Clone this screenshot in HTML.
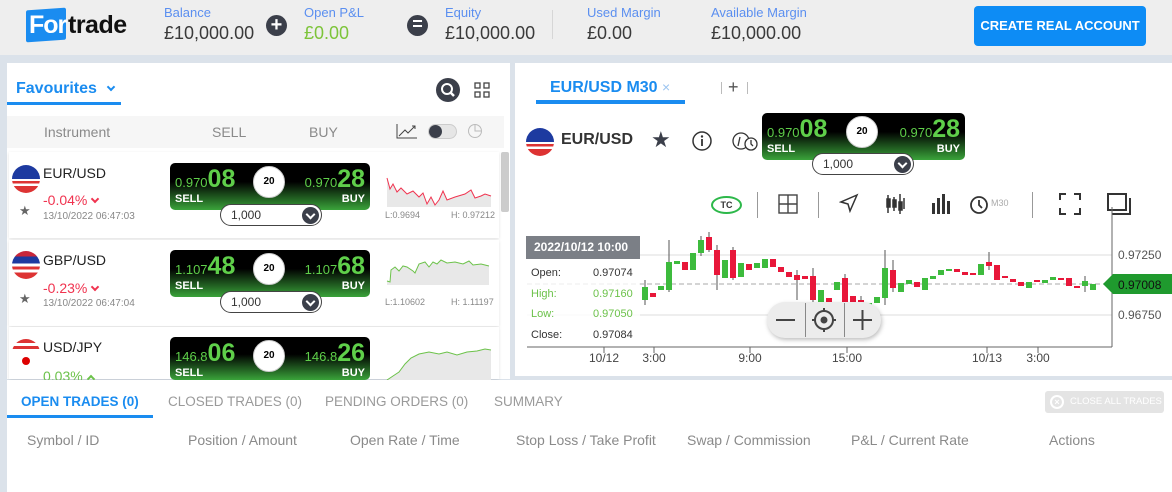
<!DOCTYPE html>
<html><head><meta charset="utf-8"><style>
*{box-sizing:border-box;margin:0;padding:0}
body{width:1172px;height:492px;overflow:hidden;background:#dbe2ea;font-family:"Liberation Sans",sans-serif;position:relative;color:#333}
.a{position:absolute;white-space:nowrap}
.hdr{left:0;top:0;width:1172px;height:55px;background:#eeeeee}
.lbl{font-size:13px;color:#5b8ff0}
.val{font-size:18px;color:#3a3a3a}
.circ{width:21px;height:21px;border-radius:50%;background:#3b3f4a;color:#fff;text-align:center;font-weight:bold}
.row{left:9px;width:490px;height:86px;background:#fff;box-shadow:0 1px 3px rgba(0,0,0,.12)}
.tk{width:200px;height:47px;border-radius:5px;background:linear-gradient(#000 0%,#000 40%,#3aa33a 100%)}
.tk .s{position:absolute;left:5px;top:2px;color:#5fcf4a;font-size:13px}
.tk .s b{font-size:25px;font-weight:bold}
.tk .l{position:absolute;color:#fff;font-weight:bold;font-size:11px;top:30px}
.tk .r{position:absolute;right:5px;top:2px;color:#5fcf4a;font-size:13px;text-align:right}
.tk .r b{font-size:25px}
.knob{width:32px;height:32px;border-radius:50%;background:#fff;border:1px solid #ccc;text-align:center;line-height:30px;font-size:10px;font-weight:bold;color:#000}
.amt{width:102px;height:22px;border-radius:11px;border:1px solid #444;background:#fff;font-size:12px;line-height:20px;padding-left:10px}
.amt i{position:absolute;right:2px;top:2px;width:17px;height:17px;border-radius:50%;background:#3b3f4a}
.amt i:after{content:"";position:absolute;left:5px;top:4px;width:5px;height:5px;border-right:2px solid #fff;border-bottom:2px solid #fff;transform:rotate(45deg)}
.dn{display:inline-block;width:6px;height:6px;border-right:2px solid #f0334f;border-bottom:2px solid #f0334f;transform:rotate(45deg);margin-left:5px;position:relative;top:-3px}
.up{display:inline-block;width:6px;height:6px;border-left:2px solid #6cc24a;border-top:2px solid #6cc24a;transform:rotate(45deg);margin-left:5px;position:relative;top:1px}
.sym{font-size:14px;color:#222}
.flag{width:28px;height:28px;border-radius:50%;overflow:hidden}
.tab{font-size:13.5px;color:#9a9a9a}
.th{font-size:14px;color:#8a8a8a}
</style></head><body>
<div class="a hdr"></div>
<div class="a" style="left:26px;top:9px;width:40px;height:32px;background:#1a8cf0;transform:skewY(-4deg);border-radius:2px"></div>
<div class="a" style="left:29px;top:11px;font-size:25px;font-weight:bold;color:#fff;letter-spacing:-1px">For</div>
<div class="a" style="left:68px;top:11px;font-size:25px;font-weight:bold;color:#111;letter-spacing:-0.5px">trade</div>

<div class="a lbl" style="left:164px;top:5px">Balance</div>
<div class="a val" style="left:164px;top:23px">£10,000.00</div>
<div class="a circ" style="left:266px;top:15px;font-size:20px;line-height:20px">+</div>
<div class="a lbl" style="left:304px;top:5px">Open P&amp;L</div>
<div class="a val" style="left:304px;top:23px;color:#7dc43a">£0.00</div>
<div class="a circ" style="left:407px;top:15px;font-size:18px;line-height:19px">=</div>
<div class="a lbl" style="left:445px;top:5px">Equity</div>
<div class="a val" style="left:445px;top:23px">£10,000.00</div>
<div class="a" style="left:552px;top:10px;width:1px;height:29px;background:#d6d6d6"></div>
<div class="a lbl" style="left:587px;top:5px">Used Margin</div>
<div class="a val" style="left:587px;top:23px">£0.00</div>
<div class="a lbl" style="left:711px;top:5px">Available Margin</div>
<div class="a val" style="left:711px;top:23px">£10,000.00</div>
<div class="a" style="left:974px;top:6px;width:172px;height:40px;background:#0d8cf5;border-radius:4px;color:#fff;font-weight:bold;font-size:13px;text-align:center;line-height:40px">CREATE REAL ACCOUNT</div>

<div class="a" style="left:7px;top:63px;width:503px;height:316px;background:#fff"></div>
<div class="a" style="left:16px;top:80px;font-size:16px;font-weight:bold;color:#1a8cf0">Favourites</div>
<div class="a" style="left:108px;top:84px;width:6px;height:6px;border-right:2px solid #1a8cf0;border-bottom:2px solid #1a8cf0;transform:rotate(45deg)"></div>
<div class="a" style="left:7px;top:102px;width:114px;height:3px;background:#1a8cf0"></div>
<div class="a circ" style="left:436px;top:78px;width:24px;height:24px"></div>
<svg class="a" style="left:436px;top:78px" width="24" height="24"><circle cx="11" cy="11" r="5" fill="none" stroke="#fff" stroke-width="2"/><line x1="15" y1="15" x2="18" y2="18" stroke="#fff" stroke-width="2.5"/></svg>
<svg class="a" style="left:474px;top:82px" width="16" height="16" fill="none" stroke="#444" stroke-width="1.3"><rect x="1" y="1" width="5" height="5"/><rect x="10" y="1" width="5" height="5"/><rect x="1" y="10" width="5" height="5"/><rect x="10" y="10" width="5" height="5"/></svg>
<div class="a" style="left:7px;top:116px;width:497px;height:32px;background:#f6f6f6"></div>
<div class="a th" style="left:44px;top:124px">Instrument</div>
<div class="a th" style="left:212px;top:124px">SELL</div>
<div class="a th" style="left:309px;top:124px">BUY</div>
<svg class="a" style="left:396px;top:123px" width="22" height="16" fill="none" stroke="#444" stroke-width="1"><path d="M1 1V15H21M3 13L9 7L12 10L19 3M16 3H19V6"/></svg>
<div class="a" style="left:428px;top:124px;width:29px;height:15px;border-radius:8px;background:#e6e6e6;border:1px solid #ccc"></div>
<div class="a" style="left:429px;top:125px;width:13px;height:13px;border-radius:50%;background:#3b3f4a"></div>
<svg class="a" style="left:467px;top:123px" width="16" height="16" fill="none" stroke="#bbb"><circle cx="8" cy="8" r="6.5"/><path d="M8 1.5V8H14.5"/></svg>
<div class="a" style="left:501px;top:152px;width:8px;height:60px;background:#ccc;border-radius:2px"></div>

<div class="a row" style="top:152px"></div>
<div class="a flag" style="left:12px;top:165px;background:linear-gradient(#1d3aa0 50%,#fff 50%,#fff 58%,#d33 58%,#d33 66%,#fff 66%,#fff 75%,#d33 75%)"></div>
<div class="a sym" style="left:43px;top:165px">EUR/USD</div>
<div class="a" style="left:43px;top:192px;color:#f0334f;font-size:14px">-0.04%<span class="dn"></span></div>
<div class="a" style="left:19px;top:203px;color:#666;font-size:13px">&#9733;</div>
<div class="a" style="left:43px;top:211px;color:#888;font-size:10px">13/10/2022 06:47:03</div>
<div class="a tk" style="left:170px;top:163px"><div class="s">0.970<b>08</b></div><div class="l" style="left:5px">SELL</div><div class="r">0.970<b>28</b></div><div class="l" style="right:5px">BUY</div></div>
<div class="a knob" style="left:253px;top:166px">20</div>
<div class="a amt" style="left:220px;top:204px">1,000<i></i></div>
<svg class="a" style="left:385px;top:164px" width="110" height="55"><path d="M2 14L5 25L8 20L12 28L16 24L22 30L28 27L34 33L38 29L42 40L46 33L50 41L54 36L58 27L62 36L70 33L80 30L86 26L90 34L96 32L100 30L106 32V43H2Z" fill="#e8e8e8"/><path d="M2 14L5 25L8 20L12 28L16 24L22 30L28 27L34 33L38 29L42 40L46 33L50 41L54 36L58 27L62 36L70 33L80 30L86 26L90 34L96 32L100 30L106 32" fill="none" stroke="#f0334f" stroke-width="1"/><text x="0" y="54" font-size="9" fill="#888" font-family="Liberation Sans">L:0.9694</text><text x="66" y="54" font-size="9" fill="#888" font-family="Liberation Sans">H: 0.97212</text></svg>

<div class="a row" style="top:240px"></div>
<div class="a flag" style="left:12px;top:251px;background:linear-gradient(#c8263a 0,#c8263a 20%,#1d3aa0 20%,#1d3aa0 45%,#fff 45%,#fff 55%,#d33 55%,#d33 66%,#fff 66%,#fff 77%,#d33 77%)"></div>
<div class="a sym" style="left:43px;top:252px">GBP/USD</div>
<div class="a" style="left:43px;top:280px;color:#f0334f;font-size:14px">-0.23%<span class="dn"></span></div>
<div class="a" style="left:19px;top:291px;color:#666;font-size:13px">&#9733;</div>
<div class="a" style="left:43px;top:298px;color:#888;font-size:10px">13/10/2022 06:47:04</div>
<div class="a tk" style="left:170px;top:250px"><div class="s">1.107<b>48</b></div><div class="l" style="left:5px">SELL</div><div class="r">1.107<b>68</b></div><div class="l" style="right:5px">BUY</div></div>
<div class="a knob" style="left:253px;top:253px">20</div>
<div class="a amt" style="left:220px;top:291px">1,000<i></i></div>
<svg class="a" style="left:385px;top:252px" width="110" height="55"><path d="M2 29L5 30L6 18L10 15L14 19L18 14L22 15L28 19L30 21L34 12L40 10L44 15L48 10L52 12L56 8L62 11L70 10L78 12L84 9L88 13L96 12L104 14V33H2Z" fill="#e8e8e8"/><path d="M2 29L5 30L6 18L10 15L14 19L18 14L22 15L28 19L30 21L34 12L40 10L44 15L48 10L52 12L56 8L62 11L70 10L78 12L84 9L88 13L96 12L104 14" fill="none" stroke="#6cc24a"/><text x="0" y="53" font-size="9" fill="#888" font-family="Liberation Sans">L:1.10602</text><text x="66" y="53" font-size="9" fill="#888" font-family="Liberation Sans">H: 1.11197</text></svg>

<div class="a row" style="top:327px;height:52px"></div>
<div class="a" style="left:12px;top:339px;width:28px;height:14px;border-radius:14px 14px 0 0;background:linear-gradient(#d33 30%,#fff 30%,#fff 50%,#d33 50%,#d33 70%,#fff 70%)"></div>
<div class="a" style="left:22px;top:357px;width:8px;height:8px;border-radius:50%;background:#d00"></div>
<div class="a sym" style="left:43px;top:339px">USD/JPY</div>
<div class="a" style="left:43px;top:368px;color:#6cc24a;font-size:14px">0.03%<span class="up"></span></div>
<div class="a tk" style="left:170px;top:337px;height:43px"><div class="s">146.8<b>06</b></div><div class="l" style="left:5px">SELL</div><div class="r">146.8<b>26</b></div><div class="l" style="right:5px">BUY</div></div>
<div class="a knob" style="left:253px;top:340px">20</div>
<svg class="a" style="left:385px;top:340px" width="110" height="40"><path d="M2 40L8 36L14 32L20 24L26 18L34 14L44 12L54 14L62 12L72 15L82 12L92 11L100 9L106 10V40Z" fill="#e8e8e8"/><path d="M2 40L8 36L14 32L20 24L26 18L34 14L44 12L54 14L62 12L72 15L82 12L92 11L100 9L106 10" fill="none" stroke="#6cc24a"/></svg>

<div class="a" style="left:515px;top:63px;width:657px;height:313px;background:#fff"></div>
<div class="a" style="left:550px;top:79px;font-size:16px;font-weight:bold;color:#1a8cf0">EUR/USD M30 <span style="color:#9bc4f0;font-weight:normal;font-size:14px">&#215;</span></div>
<div class="a" style="left:536px;top:100px;width:149px;height:4px;background:#1a8cf0"></div>
<div class="a" style="left:721px;top:82px;width:1px;height:12px;background:#bbb"></div>
<div class="a" style="left:728px;top:77px;color:#555;font-size:18px">+</div>
<div class="a" style="left:747px;top:82px;width:1px;height:12px;background:#bbb"></div>
<div class="a flag" style="left:526px;top:128px;background:linear-gradient(#1d3aa0 50%,#fff 50%,#fff 58%,#d33 58%,#d33 66%,#fff 66%,#fff 75%,#d33 75%)"></div>
<div class="a" style="left:561px;top:131px;font-size:16px;font-weight:bold;color:#333">EUR/USD</div>
<div class="a" style="left:651px;top:127px;font-size:22px;color:#3b3f4a">&#9733;</div>
<svg class="a" style="left:691px;top:130px" width="22" height="22"><circle cx="11" cy="11" r="9" fill="none" stroke="#333" stroke-width="1.5"/><circle cx="11" cy="6.5" r="1.2" fill="#333"/><path d="M11 9V16" stroke="#333" stroke-width="1.8"/></svg>
<svg class="a" style="left:731px;top:130px" width="28" height="22" fill="none" stroke="#333" stroke-width="1.3"><circle cx="10" cy="11" r="8"/><circle cx="20" cy="14" r="6" fill="#fff"/><path d="M20 10V14L22 16M9 7L7 16"/></svg>
<div class="a tk" style="left:762px;top:113px;width:203px;height:47px"><div class="s">0.970<b>08</b></div><div class="l" style="left:5px">SELL</div><div class="r">0.970<b>28</b></div><div class="l" style="right:5px">BUY</div></div>
<div class="a knob" style="left:846px;top:116px">20</div>
<div class="a amt" style="left:812px;top:153px">1,000<i></i></div>

<div class="a" style="left:711px;top:196px;width:31px;height:18px;border:2px solid #2db84a;border-radius:50%;font-size:9px;font-weight:bold;text-align:center;line-height:14px;color:#333">TC</div>
<div class="a" style="left:757px;top:192px;width:1px;height:26px;background:#999"></div>
<svg class="a" style="left:778px;top:194px" width="20" height="20" fill="none" stroke="#444" stroke-width="1.4"><rect x="1" y="1" width="18" height="18"/><path d="M10 1V19M1 10H19"/></svg>
<div class="a" style="left:818px;top:192px;width:1px;height:26px;background:#999"></div>
<svg class="a" style="left:839px;top:193px" width="20" height="20" fill="none" stroke="#333" stroke-width="1.5"><path d="M18 2L2 9L9 11L11 18Z"/></svg>
<svg class="a" style="left:885px;top:193px" width="20" height="22" stroke="#333" stroke-width="1.5"><path d="M3 2V20M9 4V18M15 1V21M19 5V16"/><rect x="2" y="6" width="3" height="8" fill="#333"/><rect x="8" y="7" width="3" height="7" fill="#333"/><rect x="14" y="9" width="3" height="8" fill="#333"/></svg>
<svg class="a" style="left:930px;top:193px" width="20" height="22" fill="#333"><rect x="2" y="10" width="3" height="11"/><rect x="7" y="5" width="3" height="16"/><rect x="12" y="1" width="3" height="20"/><rect x="17" y="8" width="3" height="13"/></svg>
<svg class="a" style="left:969px;top:194px" width="22" height="22" fill="none" stroke="#333" stroke-width="1.8"><circle cx="10" cy="11" r="8"/><path d="M10 6V11L13 14"/></svg>
<div class="a" style="left:991px;top:198px;font-size:9px;color:#aaa">M30</div>
<div class="a" style="left:1032px;top:192px;width:1px;height:26px;background:#999"></div>
<svg class="a" style="left:1059px;top:193px" width="22" height="22" fill="none" stroke="#333" stroke-width="2"><path d="M1 7V1H7M15 1H21V7M21 15V21H15M7 21H1V15"/></svg>
<svg class="a" style="left:1107px;top:193px" width="24" height="22" fill="none" stroke="#333" stroke-width="2"><rect x="1" y="1" width="18" height="16"/><path d="M5 21H23V5"/></svg>

<svg class="a" style="left:515px;top:200px" width="657" height="180" font-family="Liberation Sans">
<line x1="12" y1="55" x2="597" y2="55" stroke="#ddd"/><line x1="12" y1="115" x2="597" y2="115" stroke="#ddd"/>
<line x1="597" y1="7" x2="597" y2="147" stroke="#666"/><line x1="12" y1="147" x2="597" y2="147" stroke="#666"/>
<line x1="12" y1="84" x2="597" y2="84" stroke="#aaa" stroke-dasharray="5,3"/>
<g stroke="#666"><line x1="89" y1="147" x2="89" y2="153"/><line x1="139" y1="147" x2="139" y2="153"/><line x1="235" y1="147" x2="235" y2="153"/><line x1="332" y1="147" x2="332" y2="153"/><line x1="472" y1="147" x2="472" y2="153"/><line x1="523" y1="147" x2="523" y2="153"/></g>
<g font-size="12" fill="#444" text-anchor="middle"><text x="89" y="162">10/12</text><text x="139" y="162">3:00</text><text x="235" y="162">9:00</text><text x="332" y="162">15:00</text><text x="472" y="162">10/13</text><text x="523" y="162">3:00</text></g>
<g font-size="12" fill="#555"><text x="603" y="59">0.97250</text><text x="603" y="119">0.96750</text></g>
<path d="M588 84L598 74H657V94H598Z" fill="#1f9a2e"/><text x="603" y="89" font-size="12" fill="#111">0.97008</text>
<g transform="translate(-515,-200)">
<path stroke="#555" stroke-width="1" d="M645 280V305M669 240V292M717 245V290M733 247V280M797 270V300M813 268V302M845 274V305M885 250V305M893 260V292M989 252V270M1085 276V292M861 296V316M701 236V256M709 232V252"/>
<g fill="#3dbb3d"><rect x="642" y="287" width="6" height="13"/><rect x="658" y="286" width="6" height="4"/><rect x="666" y="262" width="6" height="28"/><rect x="674" y="261" width="6" height="3"/><rect x="690" y="253" width="6" height="17"/><rect x="698" y="240" width="6" height="13"/><rect x="722" y="260" width="6" height="18"/><rect x="738" y="263" width="6" height="14"/><rect x="754" y="263" width="6" height="5"/><rect x="762" y="259" width="6" height="9"/><rect x="818" y="290" width="6" height="16"/><rect x="834" y="282" width="6" height="8"/><rect x="866" y="303" width="6" height="10"/><rect x="874" y="297" width="6" height="6"/><rect x="882" y="268" width="6" height="30"/><rect x="898" y="283" width="6" height="9"/><rect x="906" y="280" width="6" height="4"/><rect x="922" y="278" width="6" height="12"/><rect x="930" y="276" width="6" height="3"/><rect x="938" y="270" width="6" height="5"/><rect x="946" y="269" width="6" height="2"/><rect x="978" y="264" width="6" height="11"/><rect x="1026" y="282" width="6" height="6"/><rect x="1042" y="280" width="6" height="3"/><rect x="1050" y="277" width="6" height="3"/><rect x="1082" y="281" width="6" height="5"/><rect x="1090" y="284" width="6" height="6"/></g>
<g fill="#e8173a"><rect x="650" y="293" width="6" height="4"/><rect x="682" y="262" width="6" height="8"/><rect x="706" y="237" width="6" height="13"/><rect x="714" y="250" width="6" height="25"/><rect x="730" y="250" width="6" height="28"/><rect x="746" y="264" width="6" height="6"/><rect x="770" y="259" width="6" height="8"/><rect x="778" y="267" width="6" height="5"/><rect x="786" y="272" width="6" height="5"/><rect x="794" y="275" width="6" height="5"/><rect x="802" y="276" width="6" height="3"/><rect x="810" y="276" width="6" height="24"/><rect x="826" y="298" width="6" height="8"/><rect x="842" y="278" width="6" height="24"/><rect x="850" y="296" width="6" height="8"/><rect x="858" y="300" width="6" height="12"/><rect x="890" y="270" width="6" height="18"/><rect x="914" y="282" width="6" height="5"/><rect x="954" y="269" width="6" height="3"/><rect x="962" y="272" width="6" height="3"/><rect x="970" y="273" width="6" height="2"/><rect x="986" y="262" width="6" height="4"/><rect x="994" y="265" width="6" height="15"/><rect x="1002" y="276" width="6" height="2"/><rect x="1010" y="279" width="6" height="3"/><rect x="1018" y="282" width="6" height="4"/><rect x="1034" y="280" width="6" height="2"/><rect x="1058" y="278" width="6" height="2"/><rect x="1066" y="278" width="6" height="8"/><rect x="1074" y="286" width="6" height="2"/></g>
</g>
</svg>
<div class="a" style="left:526px;top:236px;width:114px;height:23px;background:#7b7f86;color:#fff;font-size:12px;font-weight:bold;line-height:23px;padding-left:8px">2022/10/12 10:00</div>
<div class="a" style="left:526px;top:259px;width:114px;height:82px;background:rgba(255,255,255,.8)"></div>
<div class="a" style="left:531px;top:263px;font-size:11px;line-height:20.5px;color:#333">Open:<br><span style="color:#6cc24a">High:</span><br><span style="color:#6cc24a">Low:</span><br>Close:</div>
<div class="a" style="left:593px;top:263px;font-size:11px;line-height:20.5px;color:#333">0.97074<br><span style="color:#6cc24a">0.97160</span><br><span style="color:#6cc24a">0.97050</span><br>0.97084</div>
<div class="a" style="left:767px;top:302px;width:114px;height:36px;border-radius:18px;background:#ececec;box-shadow:1px 2px 4px rgba(0,0,0,.25)"></div>
<div class="a" style="left:805px;top:303px;width:1px;height:34px;background:#888"></div>
<div class="a" style="left:844px;top:303px;width:1px;height:34px;background:#888"></div>
<svg class="a" style="left:767px;top:302px" width="114" height="36" stroke="#444" stroke-width="2" fill="none"><path d="M9 18H28M86 18H105M95.5 8V28"/><circle cx="57" cy="18" r="9"/><circle cx="57" cy="18" r="2.5" fill="#444"/><path d="M57 6V10M57 26V30M45 18H49M65 18H69"/></svg>

<div class="a" style="left:7px;top:380px;width:1165px;height:112px;background:#fff"></div>
<div class="a" style="left:21px;top:394px;font-size:13.5px;font-weight:bold;color:#1a8cf0">OPEN TRADES (0)</div>
<div class="a" style="left:7px;top:415px;width:146px;height:3px;background:#1a8cf0"></div>
<div class="a tab" style="left:168px;top:394px">CLOSED TRADES (0)</div>
<div class="a tab" style="left:325px;top:394px">PENDING ORDERS (0)</div>
<div class="a tab" style="left:494px;top:394px">SUMMARY</div>
<div class="a" style="left:1045px;top:391px;width:119px;height:22px;background:#e4e4e4;border-radius:3px;color:#fff;font-size:9.5px;line-height:22px;padding-left:25px">CLOSE ALL TRADES</div>
<div class="a" style="left:1050px;top:395px;width:14px;height:14px;border-radius:50%;border:2px solid #fff;color:#fff;font-size:9px;text-align:center;line-height:10px;font-weight:bold">×</div>
<div class="a th" style="left:27px;top:432px">Symbol / ID</div>
<div class="a th" style="left:188px;top:432px">Position / Amount</div>
<div class="a th" style="left:350px;top:432px">Open Rate / Time</div>
<div class="a th" style="left:516px;top:432px">Stop Loss / Take Profit</div>
<div class="a th" style="left:687px;top:432px">Swap / Commission</div>
<div class="a th" style="left:851px;top:432px">P&amp;L / Current Rate</div>
<div class="a th" style="left:1049px;top:432px">Actions</div>
</body></html>
